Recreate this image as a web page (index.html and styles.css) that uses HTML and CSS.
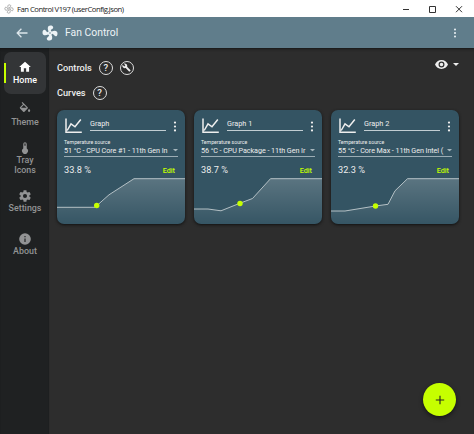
FILE: index.html
```
<!DOCTYPE html>
<html lang="en">
	<head>
		<meta charset="UTF-8" />
		<meta name="viewport" content="width=device-width, initial-scale=1.0" />
		<title>Fan Control</title>
		<link rel="stylesheet" href="styles.css">
	</head>
	<body>
		<svg class="defs">
			<defs>
				<symbol id="fan" viewBox="0 0 24 24"><path d="M12,11A1,1 0 0,0 11,12A1,1 0 0,0 12,13A1,1 0 0,0 13,12A1,1 0 0,0 12,11M12.5,2C17,2 17.11,5.57 14.75,6.75C13.76,7.24 13.32,8.29 13.13,9.22C13.61,9.42 14.03,9.73 14.35,10.13C18.05,8.13 22.03,8.92 22.03,12.5C22.03,17 18.46,17.1 17.28,14.73C16.78,13.74 15.72,13.3 14.79,13.11C14.59,13.59 14.28,14 13.88,14.34C15.87,18.03 15.08,22 11.5,22C7,22 6.91,18.42 9.27,17.24C10.25,16.75 10.69,15.71 10.89,14.79C10.4,14.59 9.97,14.27 9.65,13.87C5.96,15.85 2,15.07 2,11.5C2,7 5.56,6.89 6.74,9.26C7.24,10.25 8.29,10.68 9.22,10.87C9.41,10.39 9.73,9.97 10.14,9.65C8.15,5.96 8.94,2 12.5,2Z" /></symbol>
				<symbol id="dots" viewBox="0 0 4 12"><circle cx="2" cy="1.7" r="1.2" /><circle cx="2" cy="6" r="1.2" /><circle cx="2" cy="10.3" r="1.2" /></symbol>
				<symbol id="chart" viewBox="0 0 17 16"><path d="M1 .5V14.3H16.8M2.2 12.5L6 5.8L10 8.8L15.8 1.5" fill="none" stroke="currentColor" stroke-width="1.5" /></symbol>
				<symbol id="caret" viewBox="0 0 10 5"><path d="M0 0H10L5 5Z" /></symbol>
				<linearGradient id="fade" x1="0" y1="0" x2="0" y2="1">
					<stop offset="0" stop-color="#fff" stop-opacity=".19" />
					<stop offset="1" stop-color="#fff" stop-opacity=".01" />
				</linearGradient>
			</defs>
		</svg>

		<div class="titlebar">
			<svg class="titlebar-icon" viewBox="0 0 24 24"><use href="#fan" /></svg>
			<span class="titlebar-text">Fan Control V197 (userConfig.json)</span>
			<svg class="window-buttons" viewBox="0 0 62 10"><path d="M1 5.5H7M27.5 2.5H33.5V8.5H27.5ZM54 2.2L60 8.2M60 2.2L54 8.2" /></svg>
		</div>

		<header class="header">
			<svg class="back" viewBox="0 0 12 10"><path d="M11.5 5H1.2M5.4 .8L1.2 5L5.4 9.2" /></svg>
			<svg class="logo"><use href="#fan" /></svg>
			<span class="header-title">Fan Control</span>
			<svg class="header-dots"><use href="#dots" /></svg>
		</header>

		<div class="main">
			<nav class="sidebar">
				<a class="nav-item active">
					<svg viewBox="0 0 24 24"><path d="M10,20V14H14V20H19V12H22L12,3L2,12H5V20H10Z" /></svg>
					Home
				</a>
				<a class="nav-item theme">
					<svg viewBox="0 0 24 24"><path d="M19,11.5C19,11.5 17,13.67 17,15A2,2 0 0,0 19,17A2,2 0 0,0 21,15C21,13.67 19,11.5 19,11.5M5.21,10L10,5.21L14.79,10M16.56,8.94L7.62,0L6.21,1.41L8.59,3.79L3.44,8.94C2.85,9.5 2.85,10.47 3.44,11.06L8.94,16.56C9.23,16.85 9.62,17 10,17C10.38,17 10.77,16.85 11.06,16.56L16.56,11.06C17.15,10.47 17.15,9.5 16.56,8.94Z" /></svg>
					Theme
				</a>
				<a class="nav-item tray">
					<svg viewBox="0 0 24 24"><path d="M15 13V5A3 3 0 0 0 9 5V13A5 5 0 1 0 15 13M12 4A1 1 0 0 1 13 5V8H11V5A1 1 0 0 1 12 4Z" /></svg>
					Tray<br />Icons
				</a>
				<a class="nav-item settings">
					<svg viewBox="0 0 24 24"><path d="M12,15.5A3.5,3.5 0 0,1 8.5,12A3.5,3.5 0 0,1 12,8.5A3.5,3.5 0 0,1 15.5,12A3.5,3.5 0 0,1 12,15.5M19.43,12.97C19.47,12.65 19.5,12.33 19.5,12C19.5,11.67 19.47,11.34 19.43,11L21.54,9.37C21.73,9.22 21.78,8.95 21.66,8.73L19.66,5.27C19.54,5.05 19.27,4.96 19.05,5.05L16.56,6.05C16.04,5.66 15.5,5.32 14.87,5.07L14.5,2.42C14.46,2.18 14.25,2 14,2H10C9.75,2 9.54,2.18 9.5,2.42L9.13,5.07C8.5,5.32 7.96,5.66 7.44,6.05L4.95,5.05C4.73,4.96 4.46,5.05 4.34,5.27L2.34,8.73C2.21,8.95 2.27,9.22 2.46,9.37L4.57,11C4.53,11.34 4.5,11.67 4.5,12C4.5,12.33 4.53,12.65 4.57,12.97L2.46,14.63C2.27,14.78 2.21,15.05 2.34,15.27L4.34,18.73C4.46,18.95 4.73,19.03 4.95,18.95L7.44,17.94C7.96,18.34 8.5,18.68 9.13,18.93L9.5,21.58C9.54,21.82 9.75,22 10,22H14C14.25,22 14.46,21.82 14.5,21.58L14.87,18.93C15.5,18.67 16.04,18.34 16.56,17.94L19.05,18.95C19.27,19.03 19.54,18.95 19.66,18.73L21.66,15.27C21.78,15.05 21.73,14.78 21.54,14.63L19.43,12.97Z" /></svg>
					Settings
				</a>
				<a class="nav-item about">
					<svg viewBox="0 0 24 24"><path d="M13,9H11V7H13M13,17H11V11H13M12,2A10,10 0 0,0 2,12A10,10 0 0,0 12,22A10,10 0 0,0 22,12A10,10 0 0,0 12,2Z" /></svg>
					About
				</a>
			</nav>

			<main class="content">
				<div class="section">
					<h2>Controls</h2>
					<span class="round">?</span>
					<span class="round wrench"><svg viewBox="0 0 24 24"><path d="M22.7,19L13.6,9.9C14.5,7.6 14,4.9 12.1,3C10.1,1 7.1,.6 4.7,1.7L9,6L6,9L1.6,4.7C.4,7.1 .9,10.1 2.9,12.1C4.8,14 7.5,14.5 9.8,13.6L18.9,22.7C19.3,23.1 19.9,23.1 20.3,22.7L22.6,20.4C23.1,20 23.1,19.3 22.7,19Z" /></svg></span>
					<svg class="eye" viewBox="1 4.5 22 15"><path d="M12,9A3,3 0 0,0 9,12A3,3 0 0,0 12,15A3,3 0 0,0 15,12A3,3 0 0,0 12,9M12,17A5,5 0 0,1 7,12A5,5 0 0,1 12,7A5,5 0 0,1 17,12A5,5 0 0,1 12,17M12,4.5C7,4.5 2.73,7.61 1,12C2.73,16.39 7,19.5 12,19.5C17,19.5 21.27,16.39 23,12C21.27,7.61 17,4.5 12,4.5Z" /></svg>
					<svg class="eye-caret"><use href="#caret" /></svg>
				</div>
				<div class="section curves">
					<h2>Curves</h2>
					<span class="round">?</span>
				</div>

				<div class="cards">
					<div class="card">
						<div class="card-top">
							<svg class="chart-icon"><use href="#chart" /></svg>
							<span class="name">Graph</span>
							<svg class="card-dots"><use href="#dots" /></svg>
						</div>
						<div class="label">Temperature source</div>
						<div class="select"><span>51 °C - CPU Core #1 - 11th Gen In</span><svg><use href="#caret" /></svg></div>
						<div class="value"><span>33.8 %</span><a class="edit">Edit</a></div>
						<svg class="graph" viewBox="0 0 128 46">
							<path class="area" d="M0 29.3H39.5L52 16.8L77 .7H128V46H0Z" />
							<path class="line" d="M0 29.3H38L52 16.8L77 .7H128" />
							<circle cx="39.7" cy="27.5" r="2.7" />
						</svg>
					</div>
					<div class="card">
						<div class="card-top">
							<svg class="chart-icon"><use href="#chart" /></svg>
							<span class="name">Graph 1</span>
							<svg class="card-dots"><use href="#dots" /></svg>
						</div>
						<div class="label">Temperature source</div>
						<div class="select"><span>56 °C - CPU Package - 11th Gen Ir</span><svg><use href="#caret" /></svg></div>
						<div class="value"><span>38.7 %</span><a class="edit">Edit</a></div>
						<svg class="graph" viewBox="0 0 128 46">
							<path class="area" d="M0 31H14L27 32.8L46 25.2L58.5 20.5L76.5 .7H128V46H0Z" />
							<path class="line" d="M0 31H14L27 32.8L46 25.2L58.5 20.5L76.5 .7H128" />
							<circle cx="46" cy="25.5" r="2.7" />
						</svg>
					</div>
					<div class="card">
						<div class="card-top">
							<svg class="chart-icon"><use href="#chart" /></svg>
							<span class="name">Graph 2</span>
							<svg class="card-dots"><use href="#dots" /></svg>
						</div>
						<div class="label">Temperature source</div>
						<div class="select"><span>55 °C - Core Max - 11th Gen Intel (</span><svg><use href="#caret" /></svg></div>
						<div class="value"><span>32.3 %</span><a class="edit">Edit</a></div>
						<svg class="graph" viewBox="0 0 128 46">
							<path class="area" d="M0 33H14L44.5 28L57 26.3L64 12.8L76.5 .7H128V46H0Z" />
							<path class="line" d="M0 33H14L44.5 28L57 26.3L64 12.8L76.5 .7H128" />
							<circle cx="44.5" cy="28" r="2.7" />
						</svg>
					</div>
				</div>
			</main>
		</div>

		<button class="add"><svg viewBox="0 0 10 10"><path d="M5 .8V9.2M.8 5H9.2" /></svg></button>
	</body>
</html>
```
FILE: styles.css
```
* {
	box-sizing: border-box;
}
body {
	height: 434px;
	margin: 0;
	display: flex;
	flex-direction: column;
	overflow: hidden;
	background-color: #2d2d2d;
	color: #eee;
	font-family: Roboto, sans-serif;
}
svg {
	display: block;
	flex: none;
	fill: currentColor;
}
.defs {
	position: absolute;
	width: 0;
	height: 0;
}
.titlebar {
	flex: none;
	height: 17px;
	padding: 0 11px 0 4px;
	display: flex;
	align-items: center;
	background-color: #fff;
	color: #222;
}
.titlebar-icon {
	width: 10px;
	height: 10px;
	fill: none;
	stroke: #888;
	stroke-width: 1.6;
}
.titlebar-text {
	margin-left: 3px;
	font: 7.7px "Open Sans", sans-serif;
	letter-spacing: -0.5px;
	white-space: nowrap;
}
.window-buttons {
	width: 62px;
	height: 10px;
	margin-left: auto;
	margin-right: -1px;
	fill: none;
	stroke: #333;
	stroke-width: 1;
}
.header {
	flex: none;
	height: 31px;
	padding: 0 16px;
	display: flex;
	align-items: center;
	background-color: #607d8b;
	color: #edf3f6;
}
.back {
	width: 12px;
	height: 10px;
	fill: none;
	stroke: #dce6eb;
	stroke-width: 1.3;
}
.logo {
	width: 18px;
	height: 18px;
	margin-left: 13px;
}
.header-title {
	margin-left: 6px;
	font-size: 10.4px;
}
.header-dots {
	width: 4px;
	height: 10px;
	margin-left: auto;
	margin-right: 1px;
}
.main {
	flex: 1;
	display: flex;
}
.sidebar {
	width: 49px;
	padding: 4px 3px 0 4px;
	background-color: #1f2122;
	box-shadow: inset 0 3px 3px -2px #111;
}
.nav-item {
	height: 43px;
	padding-top: 8px;
	display: flex;
	flex-direction: column;
	align-items: center;
	font-size: 8.9px;
	font-weight: 500;
	line-height: 10px;
	color: #929394;
	text-align: center;
}
.nav-item svg {
	width: 14px;
	height: 14px;
}
.nav-item.active {
	position: relative;
	height: 42px;
	border-radius: 7px;
	background-color: #333537;
	color: #fff;
}
.nav-item.active::before {
	content: "";
	position: absolute;
	left: 0;
	top: 11px;
	width: 2px;
	height: 20px;
	background-color: #c6ff00;
}
.nav-item.theme {
	height: 39px;
}
.nav-item.active svg,
.nav-item.theme svg {
	margin-bottom: 1px;
}
.nav-item.tray {
	height: 48px;
}
.content {
	flex: 1;
	min-width: 0;
	padding: 10px 15px 0 8px;
	box-shadow: inset 0 3px 3px -2px #171717;
}
.section {
	height: 19px;
	display: flex;
	align-items: center;
}
.section h2 {
	margin: 0 7px 0 0;
	font-size: 9.2px;
	font-weight: 500;
}
.section.curves {
	margin-top: 6px;
}
.round {
	width: 14px;
	height: 14px;
	margin-right: 7px;
	display: flex;
	justify-content: center;
	align-items: center;
	border: 1px solid #ddd;
	border-radius: 50%;
	font-size: 9.5px;
	font-weight: 500;
}
.round svg {
	width: 9px;
	height: 9px;
}
.eye {
	width: 13px;
	height: 9px;
	margin-left: auto;
	margin-top: -6px;
}
.eye-caret {
	width: 6px;
	height: 3px;
	margin: -6px 0 0 5px;
}
.cards {
	margin-top: 8px;
	display: flex;
	gap: 9px;
}
.card {
	flex: none;
	width: 128px;
	height: 114px;
	display: flex;
	flex-direction: column;
	overflow: hidden;
	border-radius: 7px;
	background-color: #345463;
	box-shadow: 0 1px 3px #111;
}
.card-top {
	height: 27px;
	padding: 8px 8px 0;
	display: flex;
}
.chart-icon {
	width: 17px;
	height: 16px;
}
.name {
	width: 76px;
	height: 13px;
	margin-left: 8px;
	border-bottom: 1px solid #c1cdd2;
	font-size: 7.3px;
	line-height: 12px;
}
.card-dots {
	width: 4px;
	height: 11px;
	margin-left: auto;
	margin-top: 3px;
}
.label {
	height: 8px;
	padding-left: 7px;
	padding-top: 2px;
	font-size: 5.2px;
	line-height: 6px;
}
.select {
	height: 12px;
	margin: 0 7px;
	display: flex;
	align-items: center;
	border-bottom: 1px solid #9cadb5;
	font-size: 7.2px;
	letter-spacing: -0.07px;
}
.select span {
	white-space: nowrap;
}
.select svg {
	width: 5px;
	height: 2.5px;
	margin-left: auto;
	color: #a5b5bc;
}
.value {
	height: 21px;
	padding: 7px 10px 0 7px;
	display: flex;
	justify-content: space-between;
	font-size: 9.2px;
	line-height: 11px;
}
.edit {
	padding-top: 1px;
	color: #c6ff00;
	font-size: 7.2px;
	font-weight: 500;
}
.graph {
	width: 128px;
	height: 46px;
}
.area {
	fill: url(#fade);
}
.line {
	fill: none;
	stroke: #b4c0c5;
	stroke-width: 1;
}
.graph circle {
	fill: #c6ff00;
}
.add {
	position: fixed;
	right: 18px;
	bottom: 18px;
	width: 33px;
	height: 33px;
	padding: 0;
	display: flex;
	justify-content: center;
	align-items: center;
	border: none;
	border-radius: 50%;
	background-color: #c6ff00;
	box-shadow: 0 2px 4px rgba(0, 0, 0, 0.5);
}
.add svg {
	width: 10px;
	height: 10px;
	fill: none;
	stroke: #222;
	stroke-width: 1.1;
}
```
